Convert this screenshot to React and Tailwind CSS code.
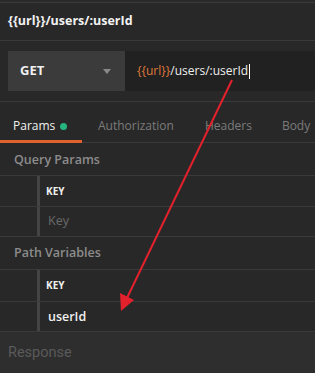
import React from "react";

function Row({ children, textClass, h }) {
  return (
    <div className={"flex border-b border-[#3a3a3a] " + h}>
      <div className="w-[37px] shrink-0" />
      <div className="w-[3px] shrink-0 bg-[#444]" />
      <div className={"flex items-center pl-[6px] " + textClass}>{children}</div>
    </div>
  );
}

export default function App() {
  return (
    <div
      className="relative w-[315px] h-[373px] overflow-hidden bg-[#282828] text-white"
      style={{ fontFamily: '"Open Sans", sans-serif' }}
    >
      <div className="h-[3px] border-b border-[#3a3a3a] bg-[#2a2a2a]" />
      <div className="flex h-[38px] items-center border-b border-[#3a3a3a] px-[8px] text-[12.5px] font-bold text-[#f2f2f2]">
        {"{{url}}/users/:userId"}
      </div>
      <div className="flex h-[61px] items-center border-b border-[#3a3a3a] pl-[8px]">
        <div className="flex h-[40px] w-[117px] items-center justify-between bg-[#3b3b3b] pl-[12px] pr-[14px]">
          <span className="text-[13px] font-bold text-[#f0f0f0]">GET</span>
          <svg width="8" height="5" viewBox="0 0 8 5">
            <path d="M0 0 L8 0 L4 5 Z" fill="#8a8a8a" />
          </svg>
        </div>
        <div className="flex h-[40px] flex-1 items-center bg-[#212121] pl-[12px] text-[12px]">
          <span className="text-[#e0793a]">{"{{url}}"}</span>
          <span className="text-[#eeeeee]">/users/:userId</span>
          <span className="ml-[1px] h-[15px] w-[1px] bg-white" />
        </div>
      </div>
      <div className="flex h-[41px] items-stretch border-b border-[#3a3a3a] text-[12px]">
        <div className="relative flex w-[82px] items-end pb-[7px] pl-[13px] text-[#f0f0f0]">
          <span>Params</span>
          <span className="mb-[5px] ml-[5px] h-[7px] w-[7px] rounded-full bg-[#26b47f]" />
          <span className="absolute bottom-[-1px] left-0 h-[3px] w-[82px] bg-[#e0622e]" />
        </div>
        <div className="flex items-end pb-[7px] pl-[16px] text-[#7b7b7b]">Authorization</div>
        <div className="flex items-end pb-[7px] pl-[31px] text-[#7b7b7b]">Headers</div>
        <div className="flex items-end pb-[7px] pl-[30px] text-[#7b7b7b]">Body</div>
      </div>
      <div className="flex h-[33px] items-center border-b border-[#3a3a3a] pl-[14px] pt-[2px] text-[12.5px] font-semibold text-[#8c8c8c]">
        Query Params
      </div>
      <Row h="h-[31px]" textClass="text-[10px] font-bold text-[#f0f0f0]">KEY</Row>
      <Row h="h-[30px]" textClass="text-[12.5px] text-[#6a6a6a] pl-[8px]">Key</Row>
      <div className="flex h-[33px] items-center border-b border-[#3a3a3a] pl-[14px] pt-[1px] text-[12.5px] font-semibold text-[#8c8c8c]">
        Path Variables
      </div>
      <Row h="h-[32px]" textClass="text-[10px] font-bold text-[#f0f0f0]">KEY</Row>
      <Row h="h-[30px]" textClass="text-[12.5px] text-[#f0f0f0] font-semibold pl-[8px] pt-[1px]">userId</Row>
      <div className="flex h-[41px] items-center bg-[#2e2e2e] pl-[8px] text-[14.5px] text-[#5a5a5a]" style={{ fontFamily: 'Roboto, sans-serif' }}>
        Response
      </div>
      <svg className="pointer-events-none absolute left-0 top-0" width="315" height="373">
        <line x1="232" y1="80" x2="127" y2="298" stroke="#e3212d" strokeWidth="2" />
        <polygon points="121,311 120,293 134,300" fill="#e3212d" />
      </svg>
    </div>
  );
}
